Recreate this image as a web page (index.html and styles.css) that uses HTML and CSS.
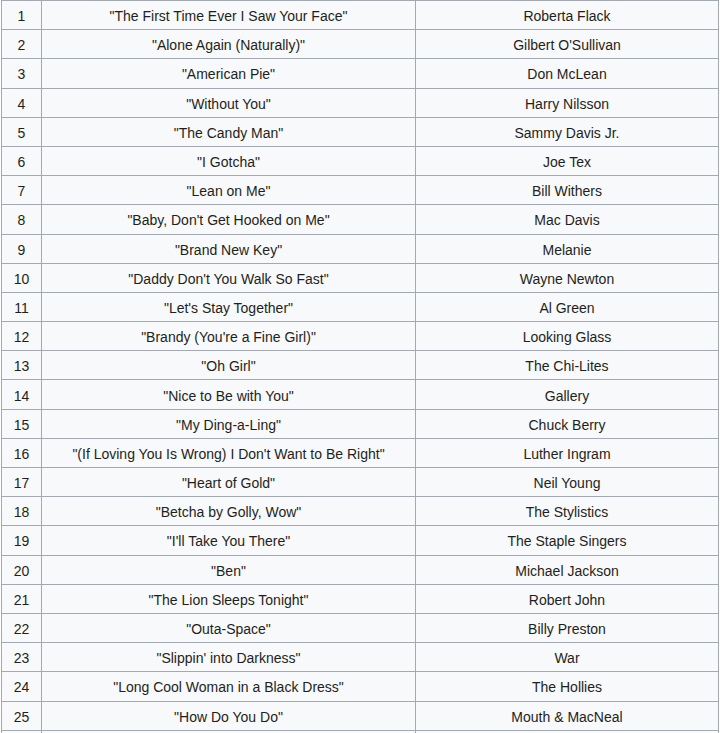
FILE: index.html
```html
<!DOCTYPE html>
<html lang="en">
<head>
<meta charset="utf-8">
<title>Billboard Year-End Hot 100 singles of 1972</title>
<link rel="stylesheet" href="styles.css">
</head>
<body>
<table class="chart">
  <colgroup>
    <col class="c-num">
    <col class="c-title">
    <col class="c-artist">
  </colgroup>
  <tbody>
    <tr><td>1</td><td>"The First Time Ever I Saw Your Face"</td><td>Roberta Flack</td></tr>
    <tr><td>2</td><td>"Alone Again (Naturally)"</td><td>Gilbert O'Sullivan</td></tr>
    <tr><td>3</td><td>"American Pie"</td><td>Don McLean</td></tr>
    <tr><td>4</td><td>"Without You"</td><td>Harry Nilsson</td></tr>
    <tr><td>5</td><td>"The Candy Man"</td><td>Sammy Davis Jr.</td></tr>
    <tr><td>6</td><td>"I Gotcha"</td><td>Joe Tex</td></tr>
    <tr><td>7</td><td>"Lean on Me"</td><td>Bill Withers</td></tr>
    <tr><td>8</td><td>"Baby, Don't Get Hooked on Me"</td><td>Mac Davis</td></tr>
    <tr><td>9</td><td>"Brand New Key"</td><td>Melanie</td></tr>
    <tr><td>10</td><td>"Daddy Don't You Walk So Fast"</td><td>Wayne Newton</td></tr>
    <tr><td>11</td><td>"Let's Stay Together"</td><td>Al Green</td></tr>
    <tr><td>12</td><td>"Brandy (You're a Fine Girl)"</td><td>Looking Glass</td></tr>
    <tr><td>13</td><td>"Oh Girl"</td><td>The Chi-Lites</td></tr>
    <tr><td>14</td><td>"Nice to Be with You"</td><td>Gallery</td></tr>
    <tr><td>15</td><td>"My Ding-a-Ling"</td><td>Chuck Berry</td></tr>
    <tr><td>16</td><td>"(If Loving You Is Wrong) I Don't Want to Be Right"</td><td>Luther Ingram</td></tr>
    <tr><td>17</td><td>"Heart of Gold"</td><td>Neil Young</td></tr>
    <tr><td>18</td><td>"Betcha by Golly, Wow"</td><td>The Stylistics</td></tr>
    <tr><td>19</td><td>"I'll Take You There"</td><td>The Staple Singers</td></tr>
    <tr><td>20</td><td>"Ben"</td><td>Michael Jackson</td></tr>
    <tr><td>21</td><td>"The Lion Sleeps Tonight"</td><td>Robert John</td></tr>
    <tr><td>22</td><td>"Outa-Space"</td><td>Billy Preston</td></tr>
    <tr><td>23</td><td>"Slippin' into Darkness"</td><td>War</td></tr>
    <tr><td>24</td><td>"Long Cool Woman in a Black Dress"</td><td>The Hollies</td></tr>
    <tr><td>25</td><td>"How Do You Do"</td><td>Mouth &amp; MacNeal</td></tr>
    <tr class="next"><td></td><td></td><td></td></tr>
  </tbody>
</table>
</body>
</html>
```

FILE: styles.css
```css
html, body {
  margin: 0;
  padding: 0;
  background: #ffffff;
}

body {
  font-family: "Liberation Sans", Arial, sans-serif;
  font-size: 14px;
  color: #1e1f20;
  overflow: hidden;
}

.chart {
  border-collapse: collapse;
  table-layout: fixed;
  width: 717px;
  margin: 0 0 0 1px;
  background: #f8f9fa;
}

.c-num { width: 40px; }
.c-title { width: 374px; }
.c-artist { width: 303px; }

.chart tr {
  height: 29.2px;
}

.chart td {
  border: 1px solid #a2a9b1;
  padding: 2px 6px 0;
  text-align: center;
  vertical-align: middle;
  white-space: nowrap;
  line-height: 18px;
}
```
